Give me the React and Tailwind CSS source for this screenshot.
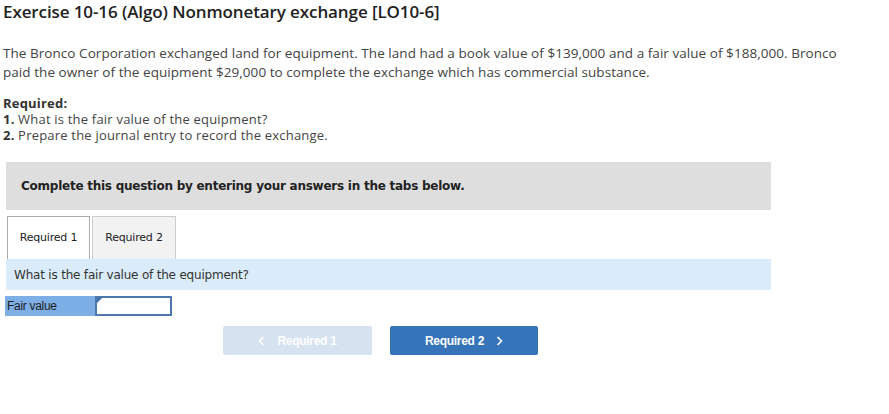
export default function App() {
  const proxima = { fontFamily: '"Open Sans", "Lato", sans-serif' };
  return (
    <div className="w-[889px] h-[414px] bg-white text-[#333]" style={proxima}>
      <h1 className="pl-[3px] pt-[2px] text-[17px] leading-[20px] font-semibold text-[#222] tracking-[-0.1px]">
        Exercise 10-16 (Algo) Nonmonetary exchange [LO10-6]
      </h1>

      <p className="pl-[3px] pt-[22px] text-[13.5px] leading-[19px] text-[#444] w-[860px] tracking-[0.05px]">
        The Bronco Corporation exchanged land for equipment. The land had a book value of $139,000 and a fair value of $188,000. Bronco paid the owner of the equipment $29,000 to complete the exchange which has commercial substance.
      </p>

      <div className="pl-[3px] pt-[13px] text-[13px] leading-[16px] text-[#444] tracking-[0.2px]">
        <div className="font-bold text-[#333]">Required:</div>
        <div><span className="font-bold text-[#333]">1.</span> What is the fair value of the equipment?</div>
        <div><span className="font-bold text-[#333]">2.</span> Prepare the journal entry to record the exchange.</div>
      </div>

      <div className="ml-[6px] mt-[19px] w-[765px] h-[48px] bg-[#dedede] flex items-center pl-[15px] text-[12px] font-bold text-[#222]" style={{ fontFamily: '"DejaVu Sans", Verdana, sans-serif', letterSpacing: '-0.25px' }}>
        Complete this question by entering your answers in the tabs below.
      </div>

      <div className="ml-[6px] w-[765px]" style={{ fontFamily: '"DejaVu Sans", Verdana, sans-serif' }}>
        <div className="flex gap-[2px] pt-[6px] pl-[1px] h-[49px] items-end">
          <div className="w-[83px] h-[43px] bg-white border border-b-0 border-[#aaa] flex items-center justify-center text-[11px] text-[#222] tracking-[-0.2px]">
            Required 1
          </div>
          <div className="w-[84px] h-[43px] bg-[#f2f2f2] border border-b-0 border-[#ccc] flex items-center justify-center text-[11px] text-[#222] tracking-[-0.2px]">
            Required 2
          </div>
        </div>
        <div className="h-[31px] bg-[#daebf9] flex items-center pl-[8px] text-[12px] text-[#333] tracking-[-0.2px]">
          What is the fair value of the equipment?
        </div>
      </div>

      <div className="mt-[6px] ml-[5px] flex h-[20px]">
        <div className="w-[90px] h-full bg-[#7daee6] text-[12px] leading-[20px] pl-[2px] text-[#222]" style={{ fontFamily: '"Liberation Sans", Arial, sans-serif', letterSpacing: '-0.3px' }}>
          Fair value
        </div>
        <div className="relative w-[77px] h-full border-2 border-[#4f79aa] bg-white">
          <div className="absolute left-0 top-0 w-0 h-0 border-t-[5px] border-t-[#3a6fb5] border-r-[5px] border-r-transparent" />
        </div>
      </div>

      <div className="flex ml-[223px] mt-[10px] gap-[18px]" style={{ fontFamily: '"Liberation Sans", Arial, sans-serif' }}>
        <button className="w-[149px] h-[29px] rounded-[2px] bg-[#d6e2f0] text-white text-[12px] font-bold flex items-center justify-center gap-[12px] tracking-[-0.3px]">
          <svg width="7" height="10" viewBox="0 0 7 10"><path d="M5.5 1 L1.5 5 L5.5 9" fill="none" stroke="white" strokeWidth="1.6" /></svg>
          Required 1
        </button>
        <button className="w-[148px] h-[29px] rounded-[2px] bg-[#3673b8] text-white text-[12px] font-bold flex items-center justify-center gap-[12px] tracking-[-0.3px]">
          Required 2
          <svg width="7" height="10" viewBox="0 0 7 10"><path d="M1.5 1 L5.5 5 L1.5 9" fill="none" stroke="white" strokeWidth="1.6" /></svg>
        </button>
      </div>
    </div>
  );
}
